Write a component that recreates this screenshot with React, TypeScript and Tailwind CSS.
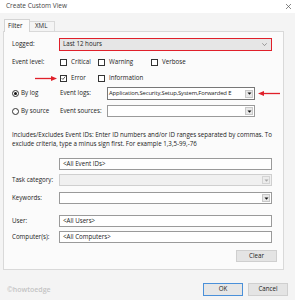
import React from "react";

const FONT = "font-['Open_Sans','Noto_Sans',sans-serif]";

function Check({ checked, label, w }: { checked?: boolean; label: string; w: string }) {
  return (
    <div className={`flex items-center gap-[4px] ${w}`}>
      <span className="flex h-[7px] w-[7px] items-center justify-center border border-[#333] bg-white">
        {checked && (
          <svg width="6" height="6" viewBox="0 0 6 6">
            <path d="M0.8 3.2 L2.3 4.7 L5.2 1.2" fill="none" stroke="#222" strokeWidth="0.9" />
          </svg>
        )}
      </span>
      <span>{label}</span>
    </div>
  );
}

function DropBtn({ disabled }: { disabled?: boolean }) {
  return (
    <span
      className={`flex h-[8px] w-[8px] shrink-0 items-center justify-center border ${
        disabled ? "border-[#d4d4d4] bg-[#ececec]" : "border-[#c8c8c8] bg-[#e8e8e8]"
      }`}
    >
      <svg width="5" height="3" viewBox="0 0 5 3">
        <path d="M0.5 0.5 L4.5 0.5 L2.5 2.8 Z" fill={disabled ? "#a8a8a8" : "#111"} />
      </svg>
    </span>
  );
}

function Field({
  label,
  value,
  drop,
  disabled,
  className = "",
}: {
  label?: string;
  value?: string;
  drop?: boolean;
  disabled?: boolean;
  className?: string;
}) {
  return (
    <div className={`flex h-[12px] items-center ${className}`}>
      <span className="w-[47px] shrink-0">{label}</span>
      <div
        className={`flex h-full w-[213px] items-center justify-between border pl-[3px] pr-[1px] ${
          disabled ? "border-[#cfcfcf] bg-[#f0f0f0]" : "border-[#9a9a9a] bg-white"
        }`}
      >
        <span>{value}</span>
        {drop && <DropBtn disabled={disabled} />}
      </div>
    </div>
  );
}

function Arrow({ dir }: { dir: "left" | "right" }) {
  return (
    <svg width="22" height="5" viewBox="0 0 22 5" className={dir === "right" ? "" : "rotate-180"}>
      <line x1="0" y1="2.5" x2="17" y2="2.5" stroke="#e0202a" strokeWidth="1.3" />
      <path d="M16 0 L22 2.5 L16 5 Z" fill="#e0202a" />
    </svg>
  );
}

export default function App() {
  return (
    <div className={`flex h-[300px] w-[295px] flex-col overflow-hidden bg-[#f4f4f4] text-[6.2px] leading-none text-[#222] ${FONT}`}>
      {/* title bar */}
      <div className="flex h-[13px] shrink-0 items-center justify-between bg-white pl-[6px] pr-[3px] text-[6.5px] text-[#444]">
        <span>Create Custom View</span>
        <svg width="7" height="7" viewBox="0 0 7 7">
          <path d="M1 1 L6 6 M6 1 L1 6" stroke="#555" strokeWidth="0.7" />
        </svg>
      </div>

      <div className="flex flex-1 flex-col pl-[3px] pt-[5px]">
        {/* tabs */}
        <div className="relative z-10 flex h-[13px] items-end pl-[1px]">
          <div className="-mb-px flex h-[13px] w-[26px] items-center border border-b-0 border-[#d4d4d4] bg-[#fbfbfb] pl-[3px]">
            Filter
          </div>
          <div className="flex h-[10px] w-[25px] items-center border border-l-0 border-b-0 border-[#d9d9d9] bg-[#f4f4f4] pl-[5px]">
            XML
          </div>
        </div>

        {/* panel */}
        <div className="flex w-[281px] flex-col border border-[#d9d9d9] bg-[#fbfbfb] pb-[7px] pl-[8px]">
          <div className="mt-[6px] flex h-[13px] items-center">
            <span className="w-[47px] shrink-0">Logged:</span>
            <div className="flex h-full w-[213px] items-center justify-between border-[1.5px] border-[#e0202a] bg-[#e6e6e6] pl-[3px] pr-[4px]">
              <span>Last 12 hours</span>
              <svg width="5" height="3" viewBox="0 0 5 3">
                <path d="M0.3 0.3 L2.5 2.6 L4.7 0.3" fill="none" stroke="#666" strokeWidth="0.6" />
              </svg>
            </div>
          </div>

          <div className="mt-[6px] flex h-[10px] items-center">
            <span className="w-[48px] shrink-0">Event level:</span>
            <Check label="Critical" w="w-[38px]" />
            <Check label="Warning" w="w-[53px]" />
            <Check label="Verbose" w="w-[40px]" />
          </div>

          <div className="mt-[6px] flex h-[10px] items-center">
            <div className="flex w-[48px] shrink-0 justify-end pr-[3px]">
              <Arrow dir="right" />
            </div>
            <Check checked label="Error" w="w-[38px]" />
            <Check label="Information" w="w-[60px]" />
          </div>

          <div className="mt-[4px] flex h-[13px] items-center">
            <div className="flex w-[48px] shrink-0 items-center gap-[2px]">
              <span className="flex h-[7px] w-[7px] items-center justify-center rounded-full border border-[#333] bg-white">
                <span className="h-[3px] w-[3px] rounded-full bg-[#111]" />
              </span>
              <span>By log</span>
            </div>
            <span className="w-[47px] shrink-0">Event logs:</span>
            <div className="flex h-full w-[148px] items-center justify-between border border-[#777] bg-white pl-[1px] pr-[1px]">
              <span className="whitespace-nowrap text-[5.9px] tracking-[-0.15px]">Application,Security,Setup,System,Forwarded E</span>
              <DropBtn />
            </div>
            <div className="ml-[3px]">
              <Arrow dir="left" />
            </div>
          </div>

          <div className="mt-[5px] flex h-[12px] items-center">
            <div className="flex w-[48px] shrink-0 items-center gap-[2px]">
              <span className="h-[7px] w-[7px] rounded-full border border-[#333] bg-white" />
              <span>By source</span>
            </div>
            <span className="w-[47px] shrink-0">Event sources:</span>
            <div className="flex h-full w-[148px] items-center justify-end border border-[#9a9a9a] bg-white pr-[1px]">
              <DropBtn />
            </div>
          </div>

          <p className="mt-[13px] w-[264px] leading-[9px]">
            Includes/Excludes Event IDs: Enter ID numbers and/or ID ranges separated by commas. To exclude criteria, type a minus sign first. For example 1,3,5-99,-76
          </p>

          <Field className="mt-[10px]" value="<All Event IDs>" />
          <Field className="mt-[4px]" label="Task category:" disabled drop />
          <Field className="mt-[6px]" label="Keywords:" drop />
          <Field className="mt-[11px]" label="User:" value="<All Users>" />
          <Field className="mt-[4px]" label="Computer(s):" value="<All Computers>" />

          <div className="mt-[7px] flex justify-end pr-[6px]">
            <button className="flex h-[12px] w-[41px] items-center justify-center border border-[#cfcfcf] bg-[#e4e4e4]">
              Clear
            </button>
          </div>
        </div>

        {/* footer */}
        <div className="mt-[13px] flex items-center justify-between pl-[4px] pr-[7px]">
          <span className="text-[7px] font-semibold text-[#c4c4c4]">©howtoedge</span>
          <div className="flex gap-[5px]">
            <button className="flex h-[13px] w-[40px] items-center justify-center border border-[#4a90d9] bg-[#e6e6e6]">
              OK
            </button>
            <button className="flex h-[13px] w-[40px] items-center justify-center border border-[#cfcfcf] bg-[#e4e4e4]">
              Cancel
            </button>
          </div>
        </div>
      </div>
    </div>
  );
}
